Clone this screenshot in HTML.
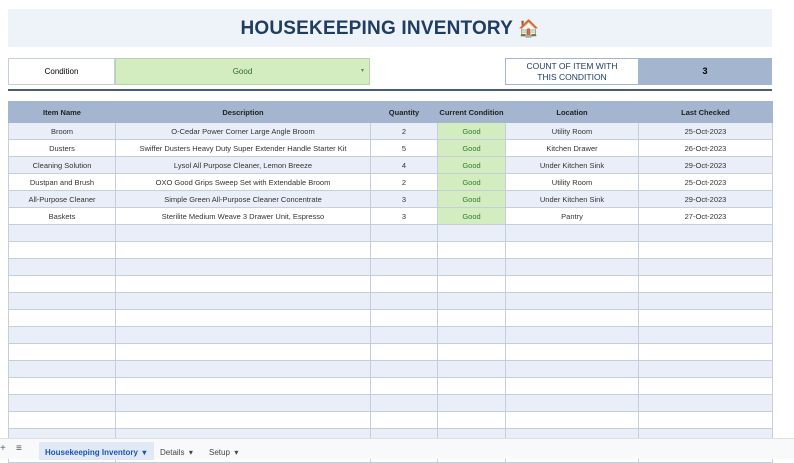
<!DOCTYPE html><html><head><style>
body{margin:0;width:794px;height:459px;overflow:hidden;background:#fff;font-family:"Liberation Sans",Arial,sans-serif;position:relative}
.a{position:absolute;box-sizing:border-box}
.title{left:8px;top:9px;width:764px;height:38px;background:#eef2f9;text-align:center;line-height:40px;font-size:19px;font-weight:bold;color:#1f3d63;letter-spacing:0.2px}
table{border-collapse:collapse;position:absolute;left:8px;top:101px;table-layout:fixed}
td{border:1px solid #c5cfdb;height:16px;padding:0;font-size:7.5px;text-align:center;color:#333;white-space:nowrap;overflow:hidden}
tr.h td{background:#a3b5cf;font-weight:bold;color:#222;height:20px;border-color:#a3b5cf}
tr:nth-child(even) td{background:#e9eef8}
td.g{background:#d4edc0!important;color:#2e7d32}
</style></head><body>
<div class="a title">HOUSEKEEPING INVENTORY <span style="font-size:17px">🏠</span></div>
<div class="a" style="left:8px;top:58px;width:107px;height:27px;border:1px solid #c5cfdb;font-size:8px;text-align:center;line-height:25px">Condition</div>
<div class="a" style="left:115px;top:58px;width:255px;height:27px;background:#d4edc0;border:1px solid #bcd3a8;font-size:8px;color:#2e6b2e;text-align:center;line-height:25px">Good<span style="position:absolute;right:5px;font-size:6px;color:#777">▾</span></div>
<div class="a" style="left:505px;top:58px;width:134px;height:27px;border:1px solid #a3b5cf;font-size:8.5px;color:#1f3d63;text-align:center;line-height:11px;padding-top:2px">COUNT OF ITEM WITH<br>THIS CONDITION</div>
<div class="a" style="left:638px;top:58px;width:134px;height:27px;background:#a3b5cf;font-size:9px;font-weight:bold;text-align:center;line-height:27px">3</div>
<div class="a" style="left:8px;top:89px;width:764px;height:2px;background:#4b5d74"></div>
<table>
<colgroup><col style="width:107px"><col style="width:255px"><col style="width:67px"><col style="width:68px"><col style="width:133px"><col style="width:134px"></colgroup>
<tr class="h"><td>Item Name</td><td>Description</td><td>Quantity</td><td>Current Condition</td><td>Location</td><td>Last Checked</td></tr>
<tr><td>Broom</td><td>O-Cedar Power Corner Large Angle Broom</td><td>2</td><td class="g">Good</td><td>Utility Room</td><td>25-Oct-2023</td></tr>
<tr><td>Dusters</td><td>Swiffer Dusters Heavy Duty Super Extender Handle Starter Kit</td><td>5</td><td class="g">Good</td><td>Kitchen Drawer</td><td>26-Oct-2023</td></tr>
<tr><td>Cleaning Solution</td><td>Lysol All Purpose Cleaner, Lemon Breeze</td><td>4</td><td class="g">Good</td><td>Under Kitchen Sink</td><td>29-Oct-2023</td></tr>
<tr><td>Dustpan and Brush</td><td>OXO Good Grips Sweep Set with Extendable Broom</td><td>2</td><td class="g">Good</td><td>Utility Room</td><td>25-Oct-2023</td></tr>
<tr><td>All-Purpose Cleaner</td><td>Simple Green All-Purpose Cleaner Concentrate</td><td>3</td><td class="g">Good</td><td>Under Kitchen Sink</td><td>29-Oct-2023</td></tr>
<tr><td>Baskets</td><td>Sterilite Medium Weave 3 Drawer Unit, Espresso</td><td>3</td><td class="g">Good</td><td>Pantry</td><td>27-Oct-2023</td></tr>
<tr><td></td><td></td><td></td><td></td><td></td><td></td></tr>
<tr><td></td><td></td><td></td><td></td><td></td><td></td></tr>
<tr><td></td><td></td><td></td><td></td><td></td><td></td></tr>
<tr><td></td><td></td><td></td><td></td><td></td><td></td></tr>
<tr><td></td><td></td><td></td><td></td><td></td><td></td></tr>
<tr><td></td><td></td><td></td><td></td><td></td><td></td></tr>
<tr><td></td><td></td><td></td><td></td><td></td><td></td></tr>
<tr><td></td><td></td><td></td><td></td><td></td><td></td></tr>
<tr><td></td><td></td><td></td><td></td><td></td><td></td></tr>
<tr><td></td><td></td><td></td><td></td><td></td><td></td></tr>
<tr><td></td><td></td><td></td><td></td><td></td><td></td></tr>
<tr><td></td><td></td><td></td><td></td><td></td><td></td></tr>
<tr><td></td><td></td><td></td><td></td><td></td><td></td></tr>
<tr><td></td><td></td><td></td><td></td><td></td><td></td></tr>
</table>
<div class="a" style="left:0;top:438px;width:794px;height:21px;background:#f8f9fa;border-top:1px solid #e0e0e0;font-size:8px;color:#444">
<span class="a" style="left:0;top:4px;font-size:10px;color:#666">+</span>
<span class="a" style="left:16px;top:4px;font-size:10px;color:#555">≡</span>
<span class="a" style="left:39px;top:3px;width:115px;height:18px;background:#e1e9f7;color:#1a56b0;font-weight:bold;padding:6px 0 0 6px">Housekeeping Inventory&nbsp; ▾</span>
<span class="a" style="left:160px;top:9px">Details&nbsp; ▾</span>
<span class="a" style="left:209px;top:9px">Setup&nbsp; ▾</span>
</div>
</body></html>
